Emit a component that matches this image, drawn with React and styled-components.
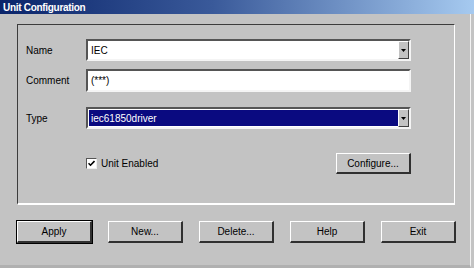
import React from "react";
import styled, { createGlobalStyle } from "styled-components";

const Global = createGlobalStyle`
  html, body {
    margin: 0;
    padding: 0;
    background: #c3c3c3;
  }
  body {
    font-family: "Liberation Sans", Arial, sans-serif;
    font-size: 10px;
    color: #000;
  }
`;

const Window = styled.div`
  width: 474px;
  height: 268px;
  display: flex;
  flex-direction: column;
  background: #c3c3c3;
  box-sizing: border-box;
  overflow: hidden;
`;

const TitleBar = styled.div`
  height: 14px;
  display: flex;
  align-items: center;
  padding-left: 3px;
  background: linear-gradient(to right, #0a246a 0%, #3a5a9a 45%, #a6caf0 100%);
  color: #fff;
  font-weight: bold;
  font-size: 10px;
  letter-spacing: -0.3px;
`;

const Body = styled.div`
  flex: 1;
  display: flex;
  flex-direction: column;
  padding: 10px 0 0 17px;
  margin-right: 3px;
  border-right: 1px solid #f2f2f2;
  border-bottom: 3px solid #b0b0b0;
`;

const Frame = styled.div`
  width: 438px;
  height: 181px;
  box-sizing: border-box;
  border-top: 1px solid #3c3c3c;
  border-left: 1px solid #3c3c3c;
  border-right: 1px solid #fff;
  border-bottom: 2px solid #fff;
  padding: 14px 0 0 8px;
  display: flex;
  flex-direction: column;
`;

const Row = styled.div`
  display: flex;
  align-items: center;
  height: ${(p) => p.h || 22}px;
  margin-top: ${(p) => p.mt || 0}px;
`;

const Label = styled.div`
  width: 60px;
  font-size: 10px;
`;

const Field = styled.div`
  width: 325px;
  height: 100%;
  box-sizing: border-box;
  display: flex;
  align-items: stretch;
  background: #fff;
  border-top: 2px solid #555;
  border-left: 2px solid #555;
  border-right: 2px solid #f4f4f4;
  border-bottom: 2px solid #f4f4f4;
`;

const FieldText = styled.div`
  flex: 1;
  display: flex;
  align-items: center;
  padding-left: 2px;
  margin: 1px 0 1px 1px;
  font-size: 10px;
  background: ${(p) => (p.selected ? "#0a0a80" : "transparent")};
  color: ${(p) => (p.selected ? "#fff" : "#000")};
`;

const DropButton = styled.div`
  width: 11px;
  box-sizing: border-box;
  background: #c3c3c3;
  border-top: 1px solid #fff;
  border-left: 1px solid #fff;
  border-right: 1px solid #404040;
  border-bottom: 1px solid #404040;
  display: flex;
  align-items: center;
  justify-content: center;
`;

const CheckRow = styled.div`
  display: flex;
  align-items: center;
  margin-top: 24px;
  height: 21px;
  padding-left: 60px;
`;

const CheckLabel = styled.label`
  display: flex;
  align-items: center;
  gap: 4px;
  width: 250px;
  font-size: 10px;
`;

const CheckBox = styled.span`
  width: 11px;
  height: 11px;
  box-sizing: border-box;
  background: #fff;
  border-top: 1px solid #555;
  border-left: 1px solid #555;
  border-right: 1px solid #eee;
  border-bottom: 1px solid #eee;
  display: flex;
  align-items: center;
  justify-content: center;
`;

const Button = styled.div`
  width: ${(p) => p.w || 75}px;
  height: ${(p) => p.h || 22}px;
  box-sizing: border-box;
  display: flex;
  align-items: center;
  justify-content: center;
  font-size: 10px;
  background: #c3c3c3;
  border-top: 1px solid #fff;
  border-left: 1px solid #fff;
  border-right: 2px solid #303030;
  border-bottom: 2px solid #303030;
  box-shadow: ${(p) => (p.primary ? "0 0 0 1px #000" : "none")};
  color: ${(p) => (p.dim ? "#333" : "#000")};
`;

const ButtonBar = styled.div`
  width: 439px;
  margin-top: 16px;
  display: flex;
  justify-content: space-between;
`;

const Arrow = () => (
  <svg width="5" height="3" viewBox="0 0 5 3">
    <path d="M0 0h5L2.5 3z" fill="#000" />
  </svg>
);

export default function App() {
  return (
    <>
      <Global />
      <Window>
        <TitleBar>Unit Configuration</TitleBar>
        <Body>
          <Frame>
            <Row h={22}>
              <Label>Name</Label>
              <Field>
                <FieldText>IEC</FieldText>
                <DropButton>
                  <Arrow />
                </DropButton>
              </Field>
            </Row>
            <Row h={23} mt={8}>
              <Label>Comment</Label>
              <Field>
                <FieldText>(***)</FieldText>
              </Field>
            </Row>
            <Row h={22} mt={15}>
              <Label>Type</Label>
              <Field>
                <FieldText selected>iec61850driver</FieldText>
                <DropButton>
                  <Arrow />
                </DropButton>
              </Field>
            </Row>
            <CheckRow>
              <CheckLabel>
                <CheckBox>
                  <svg width="7" height="7" viewBox="0 0 7 7">
                    <path d="M0.5 3.2l2 2 4-4.2" stroke="#000" strokeWidth="1.6" fill="none" />
                  </svg>
                </CheckBox>
                Unit Enabled
              </CheckLabel>
              <Button w={75} h={21}>Configure...</Button>
            </CheckRow>
          </Frame>
          <ButtonBar>
            <Button primary>Apply</Button>
            <Button>New...</Button>
            <Button>Delete...</Button>
            <Button>Help</Button>
            <Button>Exit</Button>
          </ButtonBar>
        </Body>
      </Window>
    </>
  );
}
